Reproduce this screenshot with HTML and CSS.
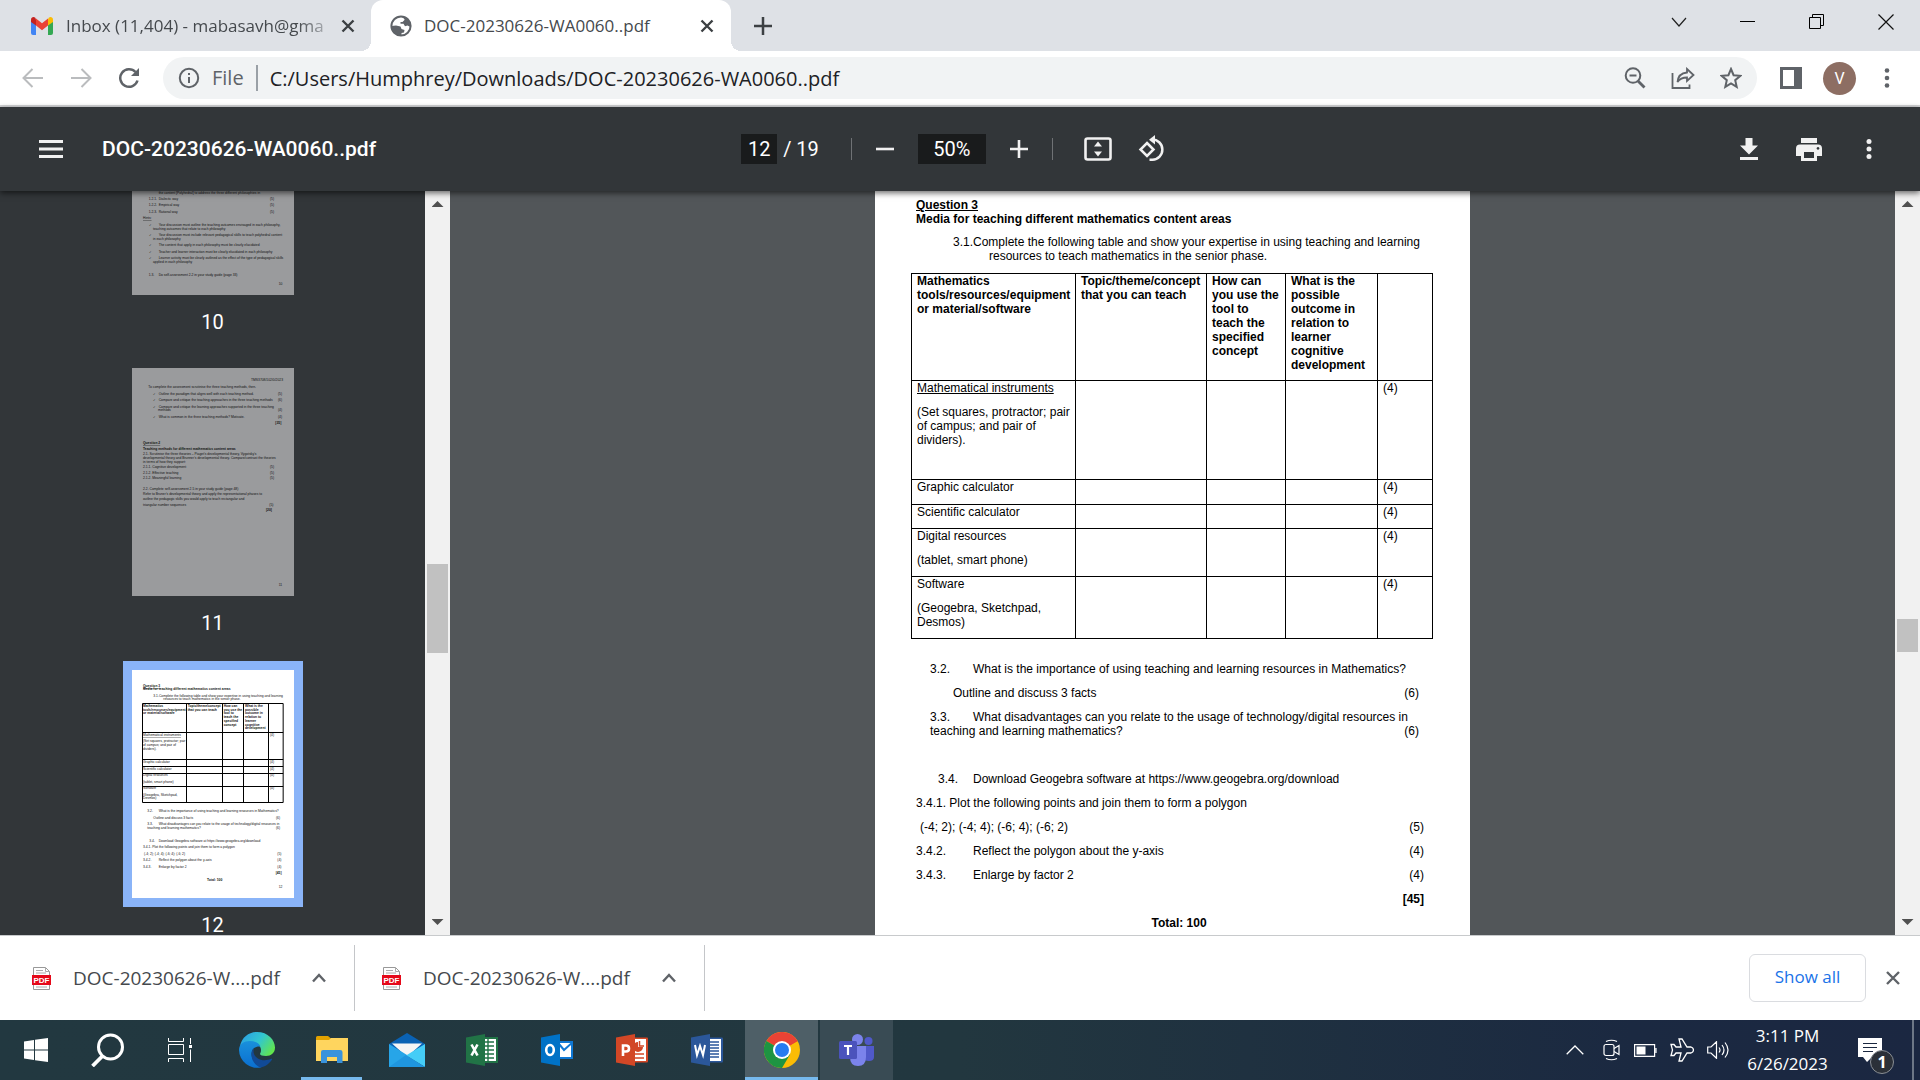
FILE: index.html
```html
<!DOCTYPE html>
<html lang="en">
<head>
<meta charset="utf-8">
<title>DOC-20230626-WA0060..pdf</title>
<link rel="stylesheet" href="styles.css">
</head>
<body>
<header class="tabstrip">
  <div class="tab">
    <svg width="24" height="18" viewBox="0 0 24 18"><path fill="#4285f4" d="M1 2v14a2 2 0 0 0 2 2h3V7L1 3z"/><path fill="#34a853" d="M18 7v11h3a2 2 0 0 0 2-2V3z"/><path fill="#fbbc04" d="M18 2.500v6L23 5V2.500C23 .3 20.500-.7 18.700.700z"/><path fill="#c5221f" d="M1 2.500V5l5 3.500v-6L5.300.700C3.500-.7 1 .3 1 2.500z"/><path fill="#ea4335" d="M6 8.500v-7l6 4.700 6-4.700v7l-6 4.700z"/></svg>
    <span class="tab-title tab-title-fade">Inbox (11,404) - mabasavh@gma</span>
    <button class="icon-btn" aria-label="Close tab"><svg width="14" height="14" viewBox="0 0 14 14"><path d="M1.500 1.500l11 11M12.500 1.500l-11 11" stroke="#3c4043" stroke-width="2.400"/></svg></button>
  </div>
  <div class="tab tab-active">
    <svg width="22" height="22" viewBox="0 0 22 22"><circle cx="11" cy="11" r="9.600" fill="#fff" stroke="#5f6368" stroke-width="2"/><path fill="#5f6368" d="M11 1.500a9.500 9.500 0 0 1 9.500 9.500v1l-3-1.500-2.500.8-1.500-2.500h-3V7h2l2.200-2.200L13 2.500zM1.500 11L6 10.500l4.500 1 1 2.500 3 1-.5 2.500L11.500 18v2.500A9.500 9.500 0 0 1 1.500 11z"/></svg>
    <span class="tab-title">DOC-20230626-WA0060..pdf</span>
    <button class="icon-btn" aria-label="Close tab"><svg width="14" height="14" viewBox="0 0 14 14"><path d="M1.500 1.500l11 11M12.500 1.500l-11 11" stroke="#3c4043" stroke-width="2.400"/></svg></button>
  </div>
  <button class="icon-btn new-tab" aria-label="New tab"><svg width="20" height="20" viewBox="0 0 20 20"><path d="M10 1v18M1 10h18" stroke="#3c4043" stroke-width="2.500"/></svg></button>
  <div class="window-controls">
    <button class="icon-btn" aria-label="Search tabs"><svg width="16" height="16" viewBox="0 0 16 16"><path d="M1 4l7 8 7-8" fill="none" stroke="#222" stroke-width="1.200"/></svg></button>
    <button class="icon-btn" aria-label="Minimize"><svg width="16" height="16" viewBox="0 0 16 16"><path d="M0 7.500h15" stroke="#000"/></svg></button>
    <button class="icon-btn" aria-label="Restore"><svg width="16" height="16" viewBox="0 0 16 16"><path d="M.5 3.500h11v11H.5zM3.500 3.500v-3h11v11h-3" fill="none" stroke="#000"/></svg></button>
    <button class="icon-btn" aria-label="Close"><svg width="16" height="16" viewBox="0 0 16 16"><path d="M.5.5l15 15M15.500.5l-15 15" stroke="#111" stroke-width="1.200"/></svg></button>
  </div>
</header>

<nav class="navbar">
  <button class="icon-btn nav-btn" aria-label="Back"><svg width="22" height="22" viewBox="0 0 22 22" fill="none" stroke="#babcbe" stroke-width="2"><path d="M21 11H2M10.500 2l-9 9 9 9"/></svg></button>
  <button class="icon-btn nav-btn" aria-label="Forward"><svg width="22" height="22" viewBox="0 0 22 22" fill="none" stroke="#babcbe" stroke-width="2"><path d="M1 11h19M11.500 2l9 9-9 9"/></svg></button>
  <button class="icon-btn nav-btn" aria-label="Reload"><svg width="22" height="22" viewBox="0 0 22 22"><path d="M19.500 13.500A8.800 8.800 0 1 1 17.500 5" fill="none" stroke="#5f6368" stroke-width="2.500"/><path d="M21 1v8h-8z" fill="#5f6368"/></svg></button>
  <div class="omnibox">
    <svg width="22" height="22" viewBox="0 0 22 22"><circle cx="11" cy="11" r="9.200" fill="none" stroke="#5f6368" stroke-width="2"/><path d="M11 10v6M11 6v2" stroke="#5f6368" stroke-width="2"/></svg>
    <span class="scheme">File</span>
    <input class="url" type="text" aria-label="Address" value="C:/Users/Humphrey/Downloads/DOC-20230626-WA0060..pdf">
    <button class="icon-btn omni-btn" aria-label="Zoom"><svg width="22" height="22" viewBox="0 0 22 22" fill="none" stroke="#5f6368" stroke-width="2"><circle cx="9" cy="8.500" r="7.300"/><path d="M14 14l6.500 6.500" stroke-width="2.800"/><path d="M5.500 8.500h7"/></svg></button>
    <button class="icon-btn omni-btn" aria-label="Share"><svg width="24" height="22" viewBox="0 0 24 22" fill="none" stroke="#5f6368" stroke-width="1.800"><path d="M1.500 6v15h17v-3.500"/><path d="M16 2l6.500 6L16 14v-3.500c-4.500 0-7.500 1.500-9.500 4.500.5-5.500 4-9 9.500-9.500z"/></svg></button>
    <button class="icon-btn omni-btn" aria-label="Bookmark"><svg width="22" height="22" viewBox="0 0 22 22"><path d="M11 2l2.600 6.200 6.700.6-5.100 4.400 1.500 6.600L11 16.300l-5.700 3.500 1.500-6.600L1.700 8.800l6.700-.6z" fill="none" stroke="#5f6368" stroke-width="2"/></svg></button>
  </div>
  <button class="icon-btn panel-btn" aria-label="Side panel"><svg width="22" height="22" viewBox="0 0 22 22"><path fill="#5f6368" fill-rule="evenodd" d="M0 0h22v22H0zM3 3v16h11V3z"/></svg></button>
  <button class="avatar" aria-label="Profile">V</button>
  <button class="icon-btn menu-btn" aria-label="Menu"><svg width="6" height="20" viewBox="0 0 6 20" fill="#5f6368"><circle cx="3" cy="2.500" r="2.300"/><circle cx="3" cy="10" r="2.300"/><circle cx="3" cy="17.500" r="2.300"/></svg></button>
</nav>

<section class="pdf-bar">
  <div class="pdf-left">
    <button class="icon-btn" aria-label="Toggle sidebar"><svg width="24" height="18" viewBox="0 0 24 18" fill="#f1f1f1"><path d="M0 0h24v3H0zM0 7.500h24v3H0zM0 15h24v3H0z"/></svg></button>
    <span class="pdf-title">DOC-20230626-WA0060..pdf</span>
  </div>
  <div class="pdf-center">
    <input class="page-input" type="text" aria-label="Page number" value="12">
    <span class="page-total">/ 19</span>
    <span class="rule"></span>
    <button class="icon-btn pdf-btn" aria-label="Zoom out"><svg width="18" height="18" viewBox="0 0 18 18"><path d="M0 9h18" stroke="#f1f1f1" stroke-width="2.600"/></svg></button>
    <input class="zoom-input" type="text" aria-label="Zoom level" value="50%">
    <button class="icon-btn pdf-btn" aria-label="Zoom in"><svg width="18" height="18" viewBox="0 0 18 18"><path d="M0 9h18M9 0v18" stroke="#f1f1f1" stroke-width="2.600"/></svg></button>
    <span class="rule rule-tight"></span>
    <button class="icon-btn pdf-btn-wide" aria-label="Fit to page"><svg width="28" height="24" viewBox="0 0 28 24"><rect x="1.500" y="1.500" width="25" height="21" rx="2" fill="none" stroke="#f1f1f1" stroke-width="2.600"/><path fill="#f1f1f1" d="M14 4.500l4 5h-8zM14 19.500l4-5h-8z"/></svg></button>
    <button class="icon-btn pdf-btn-wide" aria-label="Rotate"><svg width="28" height="28" viewBox="0 0 28 28" fill="none" stroke="#f1f1f1" stroke-width="2.500"><path d="M9 8l6.500 6.500L9 21l-6.500-6.500z"/><path d="M14 4.500a10 10 0 1 1 .5 20.200h-3"/><path d="M17 0v9.500l-6-4.800z" fill="#f1f1f1" stroke="none"/></svg></button>
  </div>
  <div class="pdf-right">
    <button class="icon-btn pdf-act" aria-label="Download"><svg width="18" height="22" viewBox="0 0 18 22" fill="#f1f1f1"><path d="M5.500 0h7v7.500H18L9 16.500 0 7.500h5.500zM0 19h18v3H0z"/></svg></button>
    <button class="icon-btn pdf-act" aria-label="Print"><svg width="26" height="23" viewBox="0 0 26 23"><path fill="#f1f1f1" fill-rule="evenodd" d="M5 0h16v5H5zM4 6.500h18a4 4 0 0 1 4 4V18h-5v5H5v-5H0v-7.500a4 4 0 0 1 4-4zM8 14v6h10v-6zM22 9a1.400 1.400 0 1 0 .01 0z"/></svg></button>
    <button class="icon-btn pdf-act" aria-label="More"><svg width="6" height="20" viewBox="0 0 6 20" fill="#f1f1f1"><circle cx="3" cy="2.500" r="2.500"/><circle cx="3" cy="10" r="2.500"/><circle cx="3" cy="17.500" r="2.500"/></svg></button>
  </div>
</section>

<main class="viewer">
  <aside class="thumbs">
    <div class="thumb-list">
      <figure class="thumb">
        <svg class="thumb-page dim" viewBox="0 0 486 312">
          <g class="tiny">
            <text x="80" y="9">the content [Polyhedral] to address the three different philosophies in</text>
            <text x="50" y="27">1.2.1.</text><text x="80" y="27">Dialectic way</text><text x="414" y="27">(5)</text>
            <text x="50" y="45">1.2.2.</text><text x="80" y="45">Empirical way</text><text x="414" y="45">(5)</text>
            <text x="50" y="66">1.2.3.</text><text x="80" y="66">Rational way</text><text x="414" y="66">(5)</text>
            <text class="u" x="33" y="84">Hints:</text>
            <text x="50" y="105">✓</text><text x="80" y="105">Your discussion must outline the teaching outcomes envisaged in each philosophy,</text>
            <text x="63" y="117">teaching outcomes that relate to each philosophy</text>
            <text x="50" y="135">✓</text><text x="80" y="135">Your discussion must include relevant pedagogical skills to teach polyhedral content</text>
            <text x="63" y="147">in each philosophy</text>
            <text x="50" y="165">✓</text><text x="80" y="165">The content that apply in each philosophy must be clearly elucidated</text>
            <text x="50" y="186">✓</text><text x="80" y="186">Teacher and learner interaction must be clearly elucidated in each philosophy</text>
            <text x="50" y="204">✓</text><text x="80" y="204">Learner activity must be clearly outlined as the effect of the type of pedagogical skills</text>
            <text x="63" y="216">applied in each philosophy</text>
            <text x="50" y="255">1.3.</text><text x="80" y="255">Do self-assessment 2.2 in your study guide (page 33)</text>
            <text x="440" y="282">10</text>
          </g>
        </svg>
        <figcaption>10</figcaption>
      </figure>
      <figure class="thumb">
        <svg class="thumb-page dim" viewBox="0 0 486 684">
          <g class="tiny">
            <text x="357" y="38">TMS3708/102/0/2023</text>
            <text x="49" y="60">To complete the assessment scrutinise the three teaching methods, then.</text>
            <text x="64" y="81">✓</text><text x="80" y="81">Outline the paradigm that aligns well with each teaching method.</text><text x="438" y="81">(5)</text>
            <text x="64" y="99">✓</text><text x="80" y="99">Compare and critique the teaching approaches in the three teaching methods</text><text x="438" y="99">(6)</text>
            <text x="64" y="120">✓</text><text x="80" y="120">Compare and critique the learning approaches supported in the three teaching</text>
            <text x="78" y="130">methods</text><text x="438" y="130">(4)</text>
            <text x="64" y="150">✓</text><text x="80" y="150">What is common in the three teaching methods? Motivate.</text><text x="438" y="150">(4)</text>
            <text class="b" x="430" y="168">[35]</text>
            <text class="b u" x="33" y="228">Question 2</text>
            <text class="b" x="33" y="246">Teaching methods for different mathematics content areas</text>
            <text x="33" y="261">2.1. Scrutinise the three theories – Piaget’s developmental theory, Vygotsky’s</text>
            <text x="33" y="273">developmental theory and Brunner’s developmental theory. Compare/contrast the theories</text>
            <text x="33" y="285">in terms of how they support:</text>
            <text x="33" y="300">2.1.1. Cognitive development</text><text x="414" y="300">(5)</text>
            <text x="33" y="318">2.1.2. Effective teaching</text><text x="414" y="318">(5)</text>
            <text x="33" y="333">2.1.2. Meaningful learning</text><text x="414" y="333">(5)</text>
            <text x="33" y="366">2.2. Complete self-assessment 2.5 in your study guide (page 48)</text>
            <text x="33" y="381">Refer to Bruner’s developmental theory and apply the representational phases to</text>
            <text x="33" y="396">outline the pedagogic skills you would apply to teach rectangular and</text>
            <text x="33" y="414">triangular number sequences</text><text x="412" y="414">(5)</text>
            <text class="b" x="402" y="429">[20]</text>
            <text x="440" y="654">11</text>
          </g>
        </svg>
        <figcaption>11</figcaption>
      </figure>
      <figure class="thumb thumb-current">
        <svg class="thumb-page" viewBox="0 0 486 684">
          <g class="tiny">
            <text class="b u" x="33" y="52">Question 3</text>
            <text class="b" x="33" y="61">Media for teaching different mathematics content areas</text>
            <text x="64" y="81">3.1.Complete the following table and show your expertise in using teaching and learning</text>
            <text x="94" y="91">resources to teach mathematics in the senior phase.</text>
            <g class="b">
              <text x="33" y="112">Mathematics</text><text x="33" y="123">tools/resources/equipment</text><text x="33" y="133">or material/software</text>
              <text x="167" y="112">Topic/theme/concept</text><text x="167" y="123">that you can teach</text>
              <text x="275" y="112">How can</text><text x="275" y="123">you use the</text><text x="275" y="133">tool to</text><text x="275" y="144">teach the</text><text x="275" y="156">specified</text><text x="275" y="168">concept</text>
              <text x="339" y="112">What is the</text><text x="339" y="123">possible</text><text x="339" y="133">outcome in</text><text x="339" y="144">relation to</text><text x="339" y="156">learner</text><text x="339" y="168">cognitive</text><text x="339" y="178">development</text>
            </g>
            <text class="u" x="33" y="199">Mathematical instruments</text>
            <text x="33" y="217">(Set squares, protractor; pair</text><text x="33" y="229">of campus; and pair of</text><text x="33" y="241">dividers).</text>
            <text x="33" y="280">Graphic calculator</text><text x="33" y="301">Scientific calculator</text><text x="33" y="319">Digital resources</text>
            <text x="33" y="340">(tablet, smart phone)</text><text x="33" y="358">Software</text><text x="33" y="378">(Geogebra, Sketchpad,</text><text x="33" y="388">Desmos)</text>
            <text x="414" y="199">(4)</text><text x="414" y="280">(4)</text><text x="414" y="301">(4)</text><text x="414" y="319">(4)</text><text x="414" y="358">(4)</text>
            <text x="46" y="426">3.2.</text><text x="80" y="426">What is the importance of using teaching and learning resources in Mathematics?</text>
            <text x="64" y="447">Outline and discuss 3 facts</text><text x="432" y="447">(6)</text>
            <text x="46" y="465">3.3.</text><text x="80" y="465">What disadvantages can you relate to the usage of technology/digital resources in</text>
            <text x="46" y="477">teaching and learning mathematics?</text><text x="432" y="477">(6)</text>
            <text x="52" y="516">3.4.</text><text x="80" y="516">Download Geogebra software at https://www.geogebra.org/download</text>
            <text x="33" y="534">3.4.1. Plot the following points and join them to form a polygon</text>
            <text x="36" y="555">(-4; 2); (-4; 4); (-6; 4); (-6; 2)</text><text x="436" y="555">(5)</text>
            <text x="33" y="573">3.4.2.</text><text x="80" y="573">Reflect the polygon about the y-axis</text><text x="436" y="573">(4)</text>
            <text x="33" y="594">3.4.3.</text><text x="80" y="594">Enlarge by factor 2</text><text x="436" y="594">(4)</text>
            <text class="b" x="431" y="612">[45]</text>
            <text class="b" x="225" y="633">Total: 100</text>
            <text x="440" y="654">12</text>
          </g>
          <path d="M31.500 100.500h422v297h-422zM31.500 187.500h422M31.500 268.500h422M31.500 289.500h422M31.500 310.500h422M31.500 349.500h422M163.500 100.500v297M271.500 100.500v297M334.500 100.500v297M409.500 100.500v297" fill="none" stroke="#000" stroke-width="3"/>
        </svg>
        <figcaption>12</figcaption>
      </figure>
    </div>
    <div class="scrollbar">
      <span class="arrow arrow-up"></span>
      <span class="gap-a"></span><span class="grip grip-side"></span><span class="gap-b"></span>
      <span class="arrow arrow-down"></span>
    </div>
  </aside>

  <div class="canvas">
    <article class="page">
      <div class="text">
        <h1 class="question">Question 3</h1>
        <h2>Media for teaching different mathematics content areas</h2>
        <p class="intro">3.1.Complete the following table and show your expertise in using teaching and learning<span class="hang">resources to teach mathematics in the senior phase.</span></p>
      </div>
      <table class="tools">
        <colgroup><col class="c1"><col class="c2"><col class="c3"><col class="c4"><col class="c5"></colgroup>
        <tr class="r-head"><th>Mathematics tools/resources/equipment or material/software</th><th>Topic/theme/concept that you can teach</th><th class="inset">How can you use the tool to teach the specified concept</th><th>What is the possible outcome in relation to learner cognitive development</th><th></th></tr>
        <tr class="r-tall"><td><p><u>Mathematical instruments</u></p><p>(Set squares, protractor; pair of campus; and pair of dividers).</p></td><td></td><td></td><td></td><td>(4)</td></tr>
        <tr class="r-one r-first"><td>Graphic calculator</td><td></td><td></td><td></td><td>(4)</td></tr>
        <tr class="r-one"><td>Scientific calculator</td><td></td><td></td><td></td><td>(4)</td></tr>
        <tr class="r-two"><td><p>Digital resources</p><p>(tablet, smart phone)</p></td><td></td><td></td><td></td><td>(4)</td></tr>
        <tr class="r-three"><td><p>Software</p><p>(Geogebra, Sketchpad, Desmos)</p></td><td></td><td></td><td></td><td>(4)</td></tr>
      </table>
      <div class="text items">
        <p class="line in1"><span class="num num1">3.2.</span>What is the importance of using teaching and learning resources in Mathematics?</p>
        <p class="line in3"><span>Outline and discuss 3 facts</span><span class="mark mark-in">(6)</span></p>
        <div>
          <p class="line in1"><span class="num num1">3.3.</span>What disadvantages can you relate to the usage of technology/digital resources in</p>
          <p class="line in1"><span>teaching and learning mathematics?</span><span class="mark mark-in">(6)</span></p>
        </div>
        <p class="line in2 spaced"><span class="num num2">3.4.</span>Download Geogebra software at https://www.geogebra.org/download</p>
        <p class="line">3.4.1. Plot the following points and join them to form a polygon</p>
        <p class="line in0"><span>(-4; 2); (-4; 4); (-6; 4); (-6; 2)</span><span class="mark">(5)</span></p>
        <p class="line"><span class="num num0">3.4.2.</span><span>Reflect the polygon about the y-axis</span><span class="mark">(4)</span></p>
        <p class="line"><span class="num num0">3.4.3.</span><span>Enlarge by factor 2</span><span class="mark">(4)</span></p>
        <p class="line bold"><span class="mark">[45]</span></p>
        <p class="total">Total: 100</p>
      </div>
    </article>
  </div>
  <div class="scrollbar">
    <span class="arrow arrow-up"></span>
    <span class="gap-c"></span><span class="grip grip-main"></span><span class="gap-b"></span>
    <span class="arrow arrow-down"></span>
  </div>
</main>

<section class="downloads">
  <div class="dl">
    <svg width="19" height="23" viewBox="0 0 19 23"><path d="M1.500.5h12l4 4v18h-16z" fill="#fff" stroke="#999"/><path d="M13.500.5v4h4M4 3.500h7M4 6h10M4 20h11" fill="none" stroke="#aaa"/><path fill="#e5091a" d="M0 8h19v10H0z"/><text x="9.500" y="16" text-anchor="middle" class="pdf-tag">PDF</text></svg>
    <span class="dl-name">DOC-20230626-W....pdf</span>
    <button class="icon-btn" aria-label="Download options"><svg width="14" height="10" viewBox="0 0 14 10"><path d="M1 8.500l6-6.500 6 6.500" fill="none" stroke="#5f6368" stroke-width="2.400"/></svg></button>
  </div>
  <div class="dl">
    <svg width="19" height="23" viewBox="0 0 19 23"><path d="M1.500.5h12l4 4v18h-16z" fill="#fff" stroke="#999"/><path d="M13.500.5v4h4M4 3.500h7M4 6h10M4 20h11" fill="none" stroke="#aaa"/><path fill="#e5091a" d="M0 8h19v10H0z"/><text x="9.500" y="16" text-anchor="middle" class="pdf-tag">PDF</text></svg>
    <span class="dl-name">DOC-20230626-W....pdf</span>
    <button class="icon-btn" aria-label="Download options"><svg width="14" height="10" viewBox="0 0 14 10"><path d="M1 8.500l6-6.500 6 6.500" fill="none" stroke="#5f6368" stroke-width="2.400"/></svg></button>
  </div>
  <button class="show-all">Show all</button>
  <button class="icon-btn" aria-label="Close downloads bar"><svg width="14" height="14" viewBox="0 0 14 14"><path d="M1 1l12 12M13 1L1 13" stroke="#5f6368" stroke-width="2.400"/></svg></button>
</section>

<footer class="taskbar">
  <div class="system">
    <button class="icon-btn sys" aria-label="Start"><svg width="24" height="24" viewBox="0 0 24 24" fill="#fff"><path d="M0 3.500L10 2v9.500H0zM11 1.800L24 0v11.500H11zM0 12.500h10V22L0 20.500zM11 12.500h13V24l-13-1.800z"/></svg></button>
    <button class="icon-btn sys" aria-label="Search"><svg width="34" height="34" viewBox="0 0 34 34" fill="none" stroke="#fff" stroke-width="3"><circle cx="19.500" cy="14" r="12"/><path d="M11.500 23L1.500 33" stroke-width="3.800"/></svg></button>
    <button class="icon-btn sys" aria-label="Task view"><svg width="24" height="24" viewBox="0 0 24 24" fill="none" stroke="#fff"><path d="M.5 0v3.500h15V0M.5 6.500h15v10H.5zM.5 24v-3.500h15V24M22.500 0v6M22.500 11.500V24"/><path d="M21 7h3v3h-3z" fill="#fff" stroke="none"/></svg></button>
  </div>
  <div class="apps">
    <button class="icon-btn app" aria-label="Edge"><svg width="36" height="36" viewBox="0 0 36 36"><defs><linearGradient id="eg" x1="0" x2="1" y1=".2" y2=".7"><stop offset="0" stop-color="#2a9fe4"/><stop offset=".5" stop-color="#32c6d0"/><stop offset="1" stop-color="#63e64a"/></linearGradient><linearGradient id="eb" x1="0" x2="0" y1="0" y2="1"><stop offset="0" stop-color="#1990dc"/><stop offset="1" stop-color="#0b6fd0"/></linearGradient></defs><path fill="url(#eg)" d="M1 14C3 5 10 0 18 0c11 0 18 8 18 15.500C36 21 32 24 27 24c-3.500 0-6-1-6-2 0-.8 1-1.200 1-4 0-4-4-7.500-9-7.500-6 0-10.500 3-12 3.500z"/><path fill="url(#eb)" d="M0 18C0 12 5 9 11 9c5 0 9 2 10.500 5.500C16 14 12.500 17 12.500 22c0 6 5 11 10 13.200A18 18 0 0 1 0 18z"/><path fill="#114a96" d="M15 16c-2 2-2.500 4-2.500 7 0 6 4.500 11 9 12.500 5-.8 9-4 11.500-8 .4-.8-.3-1-1-.7-2 1-4 1.400-6.500 1.400-6 0-11-4-11-9 0-1.200.1-2.200.5-3.200z"/></svg></button>
    <button class="icon-btn app app-open" aria-label="File Explorer"><svg width="32" height="28" viewBox="0 0 32 28"><path d="M0 1.500Q0 0 1.500 0H12l3 2.500V5H0z" fill="#e2a200"/><path d="M0 4h13l2-2h17v23H0z" fill="#ffd55e"/><path d="M5 16q0-2 2-2h17q2.500 0 2.500 2v11H21v-6H11v6H5z" fill="#3a93dc"/></svg></button>
    <button class="icon-btn app" aria-label="Mail"><svg width="36" height="34" viewBox="0 0 36 34"><path d="M0 11L18 0l18 11v8H0z" fill="#0a62b4"/><path d="M3 10.500h30L18 24z" fill="#f5f5f5"/><path d="M0 11l18 11v12H0z" fill="#27a5e8"/><path d="M36 11L17 22.500 36 34z" fill="#45cdf7"/><path d="M17 22L36 34H0z" fill="#1f96df"/></svg></button>
    <button class="icon-btn app" aria-label="Excel"><svg width="32" height="32" viewBox="0 0 32 32"><path d="M14 3h18v26H14z" fill="#217346"/><path d="M15 5h15v22H15z" fill="#fff"/><path d="M15 8h13M15 12h13M15 16h13M15 20h13M15 24h13M22 5v22" stroke="#217346" stroke-width="1.400"/><path d="M0 3.500L19 0v32L0 28.500z" fill="#217346"/><path d="M5.500 10.500l6 11M11.500 10.500l-6 11" stroke="#fff" stroke-width="2.600"/></svg></button>
    <button class="icon-btn app" aria-label="Outlook"><svg width="32" height="32" viewBox="0 0 32 32"><path d="M16 7h16v18H16z" fill="#0f78d4"/><path d="M18 9h12v14H18z" fill="#fff"/><path d="M18 10l5 6 9-8" fill="none" stroke="#0f78d4" stroke-width="2"/><path d="M0 3.500L19 0v32L0 28.500z" fill="#0072c6"/><ellipse cx="9" cy="16" rx="3.800" ry="5" fill="none" stroke="#fff" stroke-width="2.600"/></svg></button>
    <button class="icon-btn app" aria-label="PowerPoint"><svg width="32" height="32" viewBox="0 0 32 32"><path d="M14 3.500h17q1 0 1 1v23q0 1-1 1H14z" fill="#d24726"/><path d="M16 5h14v22H16z" fill="#fff"/><path d="M22 8a5 5 0 1 0 5 5h-5z" fill="#d24726"/><path d="M23.500 7v5h4.500M17 20h11M17 24h11" fill="none" stroke="#d24726" stroke-width="1.500"/><path d="M0 3.500L19 0v32L0 28.500z" fill="#d24726"/><path d="M7 22V11.500h3q3 0 3 3t-3 3H7" fill="none" stroke="#fff" stroke-width="2.600"/></svg></button>
    <button class="icon-btn app" aria-label="Word"><svg width="32" height="32" viewBox="0 0 32 32"><path d="M14 3.500h17q1 0 1 1v23q0 1-1 1H14z" fill="#2b579a"/><path d="M16 5h14v22H16z" fill="#fff"/><path d="M18 8h10M18 11h10M18 14h10M18 17h10M18 20h10M18 23h10" stroke="#2b579a" stroke-width="1.400"/><path d="M0 3.500L19 0v32L0 28.500z" fill="#2b579a"/><path d="M4 11l2 10 3-9 3 9 2-10" fill="none" stroke="#fff" stroke-width="2"/></svg></button>
    <button class="icon-btn app app-focus" aria-label="Chrome"><svg width="36" height="36" viewBox="0 0 36 36"><circle cx="18" cy="18" r="18" fill="#fbbc05"/><path d="M18 18L2.400 9A18 18 0 0 1 33.600 9z" fill="#ea4335"/><path d="M18 9h15.600L18 18z" fill="#ea4335"/><path d="M2.400 9A18 18 0 0 0 18 36l8-13.500-8-4.500z" fill="#1e9442"/><circle cx="18" cy="18" r="9" fill="#fff"/><circle cx="18" cy="18" r="7" fill="#267bf0"/></svg></button>
    <button class="icon-btn app app-hint" aria-label="Teams"><svg width="36" height="32" viewBox="0 0 36 32"><circle cx="29.500" cy="7" r="4" fill="#5059c9"/><path d="M25 12h10v11q0 4-5 4t-5-3z" fill="#5059c9"/><circle cx="18.500" cy="5.500" r="5.500" fill="#7b83eb"/><path d="M11 12h16v11q0 9-8 9t-8-9z" fill="#7b83eb"/><rect y="7" width="18" height="18" rx="1.500" fill="#4b53bc"/><path d="M5 12h8M9 12v9" stroke="#fff" stroke-width="2.200"/></svg></button>
  </div>
  <div class="tray">
    <svg class="tray-more" width="18" height="10" viewBox="0 0 18 10"><path d="M.7 9.300L9 1l8.300 8.300" fill="none" stroke="#fff" stroke-width="1.300"/></svg>
    <svg width="18" height="22" viewBox="0 0 18 22" fill="none" stroke="#fff" stroke-width="1.200"><rect x="1" y="5.500" width="10" height="11" rx="2"/><path d="M11 9.500l5-3v9l-5-3M3 2.500q5.500-2.500 11 0M3 19.500q5.500 2.500 11 0"/></svg>
    <svg width="23" height="13" viewBox="0 0 23 13"><path d="M.6.6h20v11.800H.6zM22 4v5" fill="none" stroke="#fff" stroke-width="1.200"/><path d="M2.500 2.500h9v8h-9z" fill="#fff"/></svg>
    <svg width="24" height="24" viewBox="0 0 24 24"><path d="M9 1h3l5 8h4q2.500 1 2.500 3T21 15h-4l-5 8H9l2-8H6l-2 2.500H1L2.500 12 1 6.500h3L6 9h5z" fill="none" stroke="#fff" stroke-width="1.300"/></svg>
    <svg width="23" height="18" viewBox="0 0 23 18" fill="none" stroke="#fff" stroke-width="1.200"><path d="M.7 6v6H4l5.500 5.300V.7L4 6zM12 6.500q2 2.500 0 5M15 4q4 5 0 10M18 1.500q6 7.500 0 15"/></svg>
    <div class="clock"><time>3:11 PM</time><time>6/26/2023</time></div>
    <button class="icon-btn notify" aria-label="Notifications"><svg width="24" height="24" viewBox="0 0 24 24"><path d="M0 0h24v19H14l-5 5-4-5H0z" fill="#fff"/><path d="M5 5.500h14M5 9.500h14M5 13.500h10" stroke="#1b2840" stroke-width="1.200"/></svg><span class="badge">1</span></button>
  </div>
  <span class="desktop-edge"></span>
</footer>
</body>
</html>
```
FILE: styles.css
```css
* { box-sizing: border-box; }
body {
  margin: 0;
  height: 100vh;
  display: flex;
  flex-direction: column;
  overflow: hidden;
  font-family: "Open Sans", "Noto Sans", sans-serif;
  background: #fff;
}
svg { display: block; flex: none; }
p, h1, h2, figure { margin: 0; }
.icon-btn {
  flex: none;
  padding: 0;
  border: 0;
  background: none;
  display: flex;
  align-items: center;
  justify-content: center;
}
input { border: 0; outline: 0; padding: 0; font-family: inherit; }

/* Tab strip */
.tabstrip {
  flex: none;
  height: 51px;
  display: flex;
  background: #dee1e6;
}
.tab {
  display: flex;
  align-items: center;
  width: 371px;
  padding: 0 16px 0 30px;
  gap: 12px;
}
.tab-active {
  position: relative;
  width: 360px;
  padding: 0 17px 0 19px;
  background: #fff;
  border-radius: 12px 12px 0 0;
}
.tab-active::before, .tab-active::after {
  content: "";
  position: absolute;
  bottom: 0;
  width: 10px;
  height: 10px;
}
.tab-active::before { right: 100%; background: radial-gradient(circle at 0 0, transparent 10px, #fff 10px); }
.tab-active::after { left: 100%; background: radial-gradient(circle at 100% 0, transparent 10px, #fff 10px); }
.tab-title {
  flex: 1;
  white-space: nowrap;
  font-size: 17px;
  line-height: 24px;
  color: #45494d;
}
.tab-title-fade {
  -webkit-mask-image: linear-gradient(90deg, #000 88%, transparent 104%);
  mask-image: linear-gradient(90deg, #000 88%, transparent 104%);
}
.new-tab { width: 64px; }
.window-controls { display: flex; margin-left: auto; padding-bottom: 8px; }
.window-controls .icon-btn { width: 69px; }

/* Address row */
.navbar {
  flex: none;
  height: 56px;
  display: flex;
  align-items: center;
  padding: 0 30px 0 9px;
  border-bottom: 2px solid #d5d6d8;
}
.nav-btn { width: 48px; }
.omnibox {
  flex: 1;
  height: 42px;
  margin-left: 10px;
  padding: 0 2px 0 15px;
  display: flex;
  align-items: center;
  border-radius: 21px;
  background: #f1f3f4;
}
.scheme {
  margin-left: 12px;
  padding-right: 12px;
  border-right: 2px solid #9aa0a6;
  font-size: 20px;
  line-height: 26px;
  color: #5f6368;
}
.url {
  flex: 1;
  margin-left: 12px;
  background: none;
  font-size: 20px;
  color: #202124;
}
.omni-btn { width: 48px; }
.panel-btn { margin-left: 23px; }
.avatar {
  width: 33px;
  height: 33px;
  margin: 0 28px 0 21px;
  padding: 0;
  border: 0;
  border-radius: 50%;
  background: #8d6e63;
  color: #fff;
  font: 16px Roboto, sans-serif;
}

/* PDF toolbar */
.pdf-bar {
  flex: none;
  height: 84px;
  display: grid;
  grid-template-columns: 1fr auto 1fr;
  align-items: center;
  background: #323639;
  color: #fff;
  font-family: Roboto, sans-serif;
  box-shadow: 0 2px 6px rgba(0, 0, 0, .6);
  z-index: 1;
}
.pdf-left { display: flex; align-items: center; gap: 39px; padding-left: 39px; }
.pdf-title { font-size: 21px; font-weight: 500; }
.pdf-center { display: flex; align-items: center; font-size: 20px; }
.page-input, .zoom-input {
  height: 30px;
  background: #191b1c;
  color: #fff;
  font-size: 20px;
  text-align: center;
}
.page-input { width: 36px; }
.zoom-input { width: 68px; }
.page-total { margin: 0 32px 0 6px; }
.rule { width: 1px; height: 22px; background: #6f7275; }
.pdf-btn { width: 66px; }
.rule-tight + .pdf-btn-wide { margin-left: 18px; }
.pdf-btn-wide { width: 54px; }
.pdf-right { display: flex; justify-content: flex-end; padding-right: 21px; }
.pdf-act { width: 60px; }

/* Viewer */
.viewer { flex: 1; min-height: 0; display: flex; background: #525659; }
.thumbs { width: 450px; display: flex; background: #323639; }
.thumb-list { flex: 1; overflow: hidden; }
.thumb { display: flex; flex-direction: column; align-items: center; color: #fff; }
.thumb-page { width: 162px; background: #fff; }
.dim { background: #9a9b9d; }
.thumb figcaption {
  height: 73px;
  padding-top: 15px;
  font: 20px/24px Roboto, sans-serif;
}
.thumb-current .thumb-page {
  width: 180px;
  border: 9px solid #8ab4f8;
}
.thumb-current { margin-top: -8px; }
.thumb-current figcaption { padding-top: 6px; }
.tiny { font: 10px "Liberation Sans", Arial, sans-serif; fill: #111; }
.b { font-weight: 700; }
.u { text-decoration: underline; }

.scrollbar {
  width: 25px;
  flex: none;
  display: flex;
  flex-direction: column;
  align-items: center;
  background: #f1f1f1;
}
.arrow { flex: none; width: 12px; height: 6px; background: #505050; }
.arrow-up { margin: 10px 0 9px; clip-path: polygon(50% 0, 100% 100%, 0 100%); }
.arrow-down { margin: 9px 0 10px; clip-path: polygon(0 0, 100% 0, 50% 100%); }
.grip { width: 21px; background: #c1c1c1; }
.gap-a { flex: 348; }
.gap-b { flex: 257; }
.gap-c { flex: 402; }
.grip-side { flex: 90; }
.grip-main { flex: 33; }

.canvas { flex: 1; overflow: hidden; display: flex; justify-content: center; align-items: flex-start; }
.page {
  width: 595px;
  padding: 8px 37px 40px 36px;
  background: #fff;
  color: #000;
  font: 12px/14px "Liberation Sans", Arial, sans-serif;
}
.page h1, .page h2 { font-size: 12px; line-height: 14px; }
.page .question { line-height: 13px; text-decoration: underline; }
.text { padding: 0 4px 0 5px; }
.intro { margin: 9px 0 10px; padding-left: 37px; white-space: nowrap; }
.hang { display: block; padding-left: 36px; }
.tools { width: 100%; table-layout: fixed; border-collapse: collapse; }
.c1 { width: 164px; }
.c2 { width: 131px; }
.c3 { width: 79px; }
.c4 { width: 92px; }
.tools th, .tools td {
  padding: 0 0 0 5px;
  border: 1px solid #000;
  text-align: left;
  vertical-align: top;
}
.tools .inset { padding-right: 4px; }
.tools p + p { margin-top: 10px; }
.r-head { height: 107px; }
.r-tall { height: 99px; }
.r-one { height: 24px; }
.r-first { height: 25px; }
.r-two { height: 48px; }
.r-three { height: 62px; }
.items { display: flex; flex-direction: column; gap: 10px; margin-top: 23px; }
.line { display: flex; white-space: nowrap; }
.in0 { padding-left: 4px; }
.in1 { padding-left: 14px; }
.in2 { padding-left: 22px; }
.in3 { padding-left: 37px; }
.num0 { width: 57px; }
.num1 { width: 43px; }
.num2 { width: 35px; }
.mark { margin-left: auto; padding-right: 5px; }
.mark-in { padding-right: 10px; }
.spaced { margin-top: 24px; }
.bold, .total { font-weight: 700; }
.total { text-align: center; padding-left: 13px; }

/* Downloads bar */
.downloads {
  flex: none;
  height: 85px;
  display: flex;
  align-items: center;
  padding-right: 20px;
  border-top: 1px solid #c8cacc;
  background: #fff;
}
.dl {
  height: 66px;
  width: 350px;
  display: flex;
  align-items: center;
  padding: 0 28px 0 27px;
  border-right: 1px solid #c4c6c9;
}
.dl:first-child { width: 355px; padding-left: 32px; }
.dl-name { flex: 1; margin-left: 22px; font-size: 19px; color: #45494d; white-space: nowrap; }
.pdf-tag { font: 700 8px "Liberation Sans", Arial, sans-serif; fill: #fff; }
.show-all {
  width: 117px;
  height: 48px;
  margin: 0 20px 0 auto;
  padding: 0 0 4px;
  border: 1px solid #dadce0;
  border-radius: 6px;
  background: #fff;
  color: #1a73e8;
  font: 500 17px "Open Sans", sans-serif;
}

/* Taskbar */
.taskbar {
  flex: none;
  height: 60px;
  display: flex;
  background: linear-gradient(90deg, #223840, #22373f 50%, #1f3140 65%, #1b2941 85%, #1b2741);
  color: #fff;
}
.system { display: flex; }
.sys { width: 72px; }
.apps { display: flex; gap: 2px; margin-left: 4px; }
.app { width: 73px; border-bottom: 3px solid transparent; padding-top: 3px; }
.app-open { background: linear-gradient(#76b9ed, #76b9ed) center bottom / 61px 3px no-repeat border-box; }
.app-focus { background: #4e5f67; border-color: #76b9ed; }
.app-hint { background: #394b54; }
.tray { display: flex; align-items: center; gap: 13px; margin-left: auto; padding-right: 30px; }
.tray-more { margin-right: 6px; }
.clock {
  display: flex;
  flex-direction: column;
  align-items: center;
  width: 89px;
  font-size: 17px;
  line-height: 28px;
}
.notify { position: relative; margin-left: 13px; }
.badge {
  position: absolute;
  left: 12px;
  top: 12px;
  width: 24px;
  height: 24px;
  border: 1px solid #8a8f95;
  border-radius: 50%;
  background: #2b3038;
  color: #fff;
  font: 700 16px/22px "Open Sans", sans-serif;
}
.desktop-edge { width: 8px; border-left: 2px solid #6d7786; }
```
